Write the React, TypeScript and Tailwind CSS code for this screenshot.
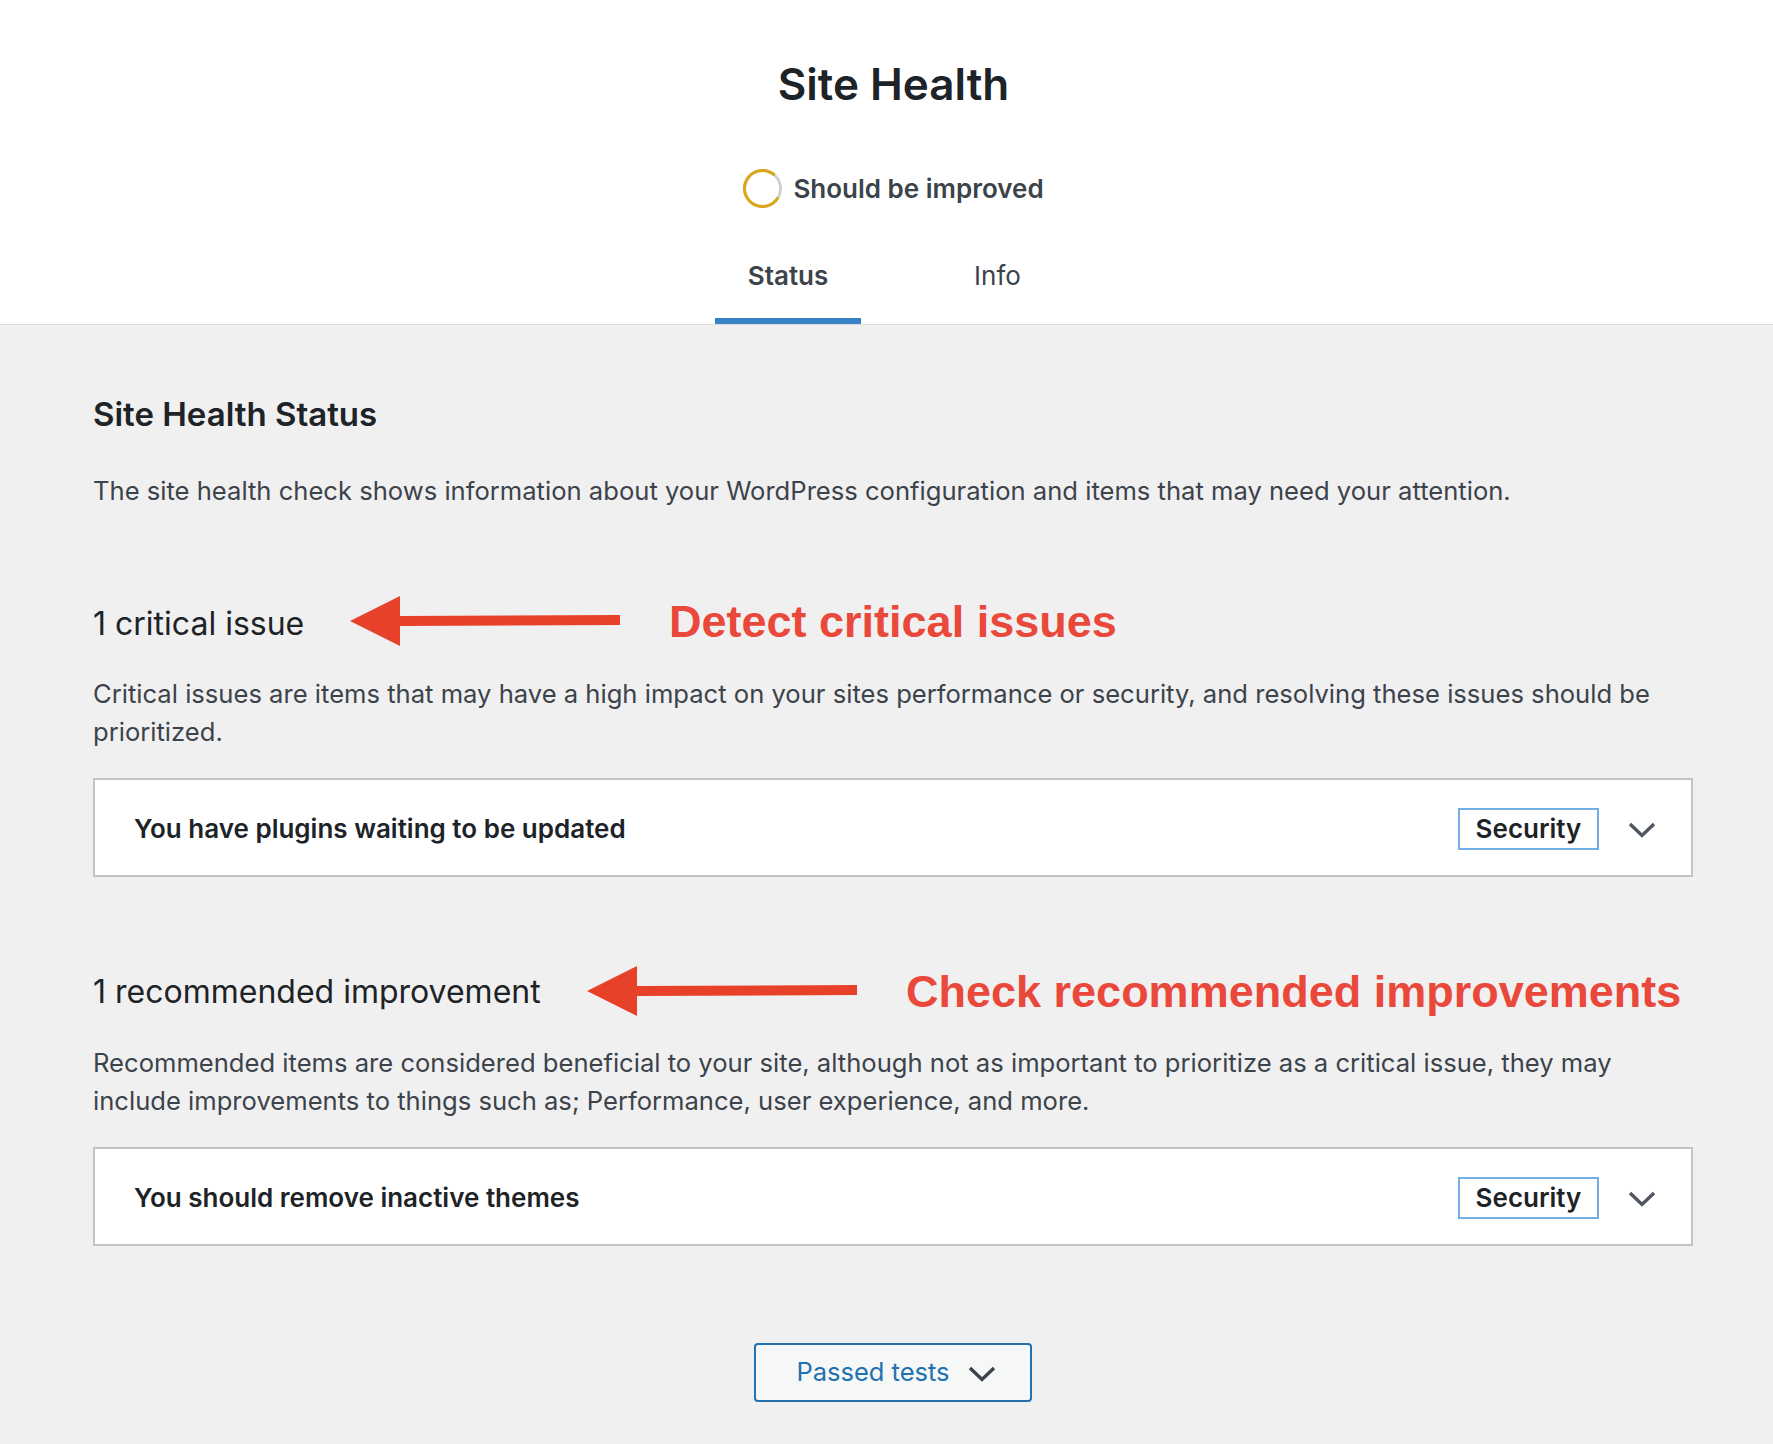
import React from 'react';

// Site Health screen with two red callouts pointing at the issue groups

function ProgressRing() {
  return (
    <svg width="39" height="39" viewBox="0 0 39 39" className="shrink-0">
      <circle cx="19.5" cy="19.5" r="18" fill="none" stroke="#d0d1d3" strokeWidth="3" />
      <circle
        cx="19.5"
        cy="19.5"
        r="18"
        fill="none"
        stroke="#dba617"
        strokeWidth="3"
        strokeDasharray="88 200"
        transform="rotate(30 19.5 19.5)"
      />
    </svg>
  );
}

function Chevron({ className = '' }: { className?: string }) {
  return (
    <svg width="28" height="16" viewBox="0 0 28 16" className={className}>
      <polyline points="2,2 14,13.5 26,2" fill="none" stroke="currentColor" strokeWidth="3.4" />
    </svg>
  );
}

function RedArrow() {
  return (
    <svg width="270" height="50" viewBox="0 0 270 50" className="shrink-0">
      <polygon points="0,25 50,0 50,20 270,19 270,29 50,30 50,50" fill="#e8412a" />
    </svg>
  );
}

function Callout({ label }: { label: string }) {
  return (
    <div className="flex items-center">
      <RedArrow />
      <span className="ml-[49px] font-['Liberation_Sans',Arial,sans-serif] text-[45px] font-bold leading-none text-[#e9483a] whitespace-nowrap">
        {label}
      </span>
    </div>
  );
}

function IssueCard({ title }: { title: string }) {
  return (
    <div className="flex h-[99px] items-center border-2 border-[#c3c4c7] bg-white pl-[39px] pr-[35px] pt-[2px]">
      <span className="flex-1 text-[26px] font-semibold text-[#1d2327]">{title}</span>
      <span className="flex h-[42px] w-[141px] items-center justify-center border-2 border-[#72aee6] text-[26px] font-semibold text-[#1d2327]">
        Security
      </span>
      <Chevron className="ml-[29px] mt-[3px] text-[#50575e]" />
    </div>
  );
}

const tabs = [
  { id: 'status', label: 'Status', width: 'w-[146px]' },
  { id: 'info', label: 'Info', width: 'w-[121px]' },
];

export default function App() {
  const activeTab = 'status';

  return (
    <div className="min-h-screen bg-[#f0f0f1] font-['Inter',sans-serif] text-[#3c434a]">
      {/* Header */}
      <div className="border-b border-[#dcdcde] bg-white pt-[58px]">
        <h1 className="pl-[14px] text-center text-[44px] font-semibold leading-[53px] text-[#1d2327]">Site Health</h1>
        <div className="mt-[58px] flex items-center justify-center gap-[11px] pl-[14px]">
          <ProgressRing />
          <span className="text-[26px] font-semibold leading-[39px] text-[#3c434a]">Should be improved</span>
        </div>
        <nav className="mt-[52px] flex justify-center gap-[76px]">
          {tabs.map((tab) => (
            <a
              key={tab.id}
              className={`flex h-[64px] items-start justify-center border-b-[6px] text-[26px] leading-[32px] ${tab.width} ${
                activeTab === tab.id
                  ? 'border-[#3582c4] font-semibold text-[#3c434a]'
                  : 'border-transparent font-normal text-[#3c434a]'
              }`}
            >
              {tab.label}
            </a>
          ))}
        </nav>
      </div>

      {/* Body */}
      <div className="pl-[93px] pr-[80px] pb-[43px]">
        <h2 className="mt-[70px] text-[33px] font-semibold leading-[38px] text-[#1d2327]">Site Health Status</h2>
        <p className="mt-[39px] text-[25.6px] leading-[38px]">
          The site health check shows information about your WordPress configuration and items that may need your attention.
        </p>

        <div className="relative mt-[94px]">
          <h3 className="text-[32px] font-normal leading-[40px] text-[#1d2327]">1 critical issue</h3>
          <div className="absolute left-[257px] top-[-8px]">
            <Callout label="Detect critical issues" />
          </div>
        </div>
        <p className="mt-[31px] text-[25.6px] leading-[38px]">
          Critical issues are items that may have a high impact on your sites performance or security, and resolving these issues should be prioritized.
        </p>
        <div className="mt-[27px]">
          <IssueCard title="You have plugins waiting to be updated" />
        </div>

        <div className="relative mt-[95px]">
          <h3 className="text-[32px] font-normal leading-[40px] text-[#1d2327]">1 recommended improvement</h3>
          <div className="absolute left-[494px] top-[-6px]">
            <Callout label="Check recommended improvements" />
          </div>
        </div>
        <p className="mt-[32px] text-[25.6px] leading-[38px]">
          Recommended items are considered beneficial to your site, although not as important to prioritize as a critical issue, they may include improvements to things such as; Performance, user experience, and more.
        </p>
        <div className="mt-[27px]">
          <IssueCard title="You should remove inactive themes" />
        </div>

        <div className="mt-[97px] flex justify-center">
          <button className="flex h-[59px] w-[278px] items-center justify-center gap-[18px] rounded-[4px] border-2 border-[#2271b1] bg-[#f6f7f7] pl-[6px] text-[25.5px] text-[#2271b1]">
            Passed tests
            <Chevron className="mt-[2px] text-[#3c434a]" />
          </button>
        </div>
      </div>
    </div>
  );
}
